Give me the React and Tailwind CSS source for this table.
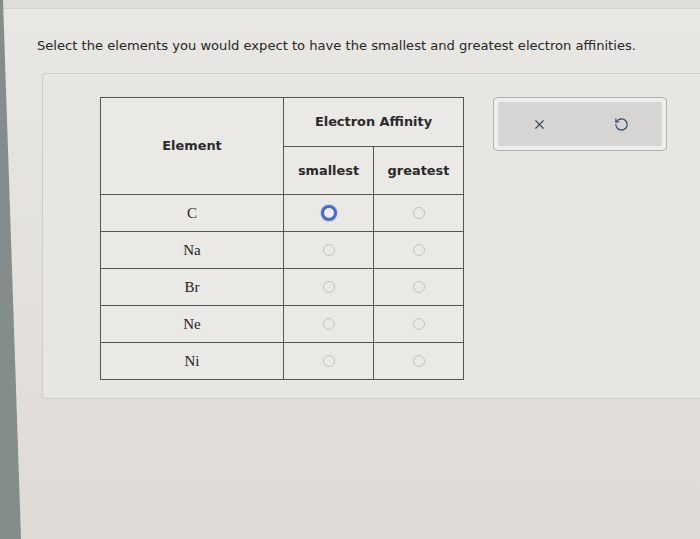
import { X, RotateCcw } from "lucide-react";

const elements = ["C", "Na", "Br", "Ne", "Ni"];

function Radio({ selected }) {
  if (selected) {
    return (
      <div className="mx-auto w-[16px] h-[16px] rounded-full border-[3px] border-[#4b69cf] bg-[#eef0f8] shadow-[0_0_2px_#7d97e6]" />
    );
  }
  return <div className="mx-auto w-[12px] h-[12px] rounded-full border border-[#c3c2bf]" />;
}

export default function App() {
  return (
    <div className="relative w-[700px] h-[539px] overflow-hidden bg-linear-to-b from-[#e9e7e3] to-[#dedbd6] font-['DejaVu_Sans',sans-serif]">
      <div className="absolute left-0 top-0 w-[22px] h-full bg-[#858c8c] [clip-path:polygon(0_0,3px_0,21px_100%,0_100%)]" />
      <div className="h-[9px] bg-[#e0deda] border-b border-[#d4d2ce]" />

      <p className="pl-[37px] pt-[28px] text-[13.1px] leading-[18px] text-[#262626]">
        Select the elements you would expect to have the smallest and greatest electron affinities.
      </p>

      <div className="mt-[18px] ml-[42px] h-[326px] border border-r-0 border-[#cfcdc9] rounded-l-[4px] bg-[#e8e6e2]">
        <div className="flex items-start pt-[23px] pl-[57px]">
          <table className="border-collapse bg-[#ebe9e5] text-[#2a2a2a]">
            <tbody>
              <tr className="h-[49px]">
                <th rowSpan={2} className="w-[183px] border border-[#555] text-[12.9px] font-bold">
                  Element
                </th>
                <th colSpan={2} className="border border-[#555] text-[12.9px] font-bold">
                  Electron Affinity
                </th>
              </tr>
              <tr className="h-[48px]">
                <th className="w-[90px] border border-[#555] text-[12.9px] font-bold">smallest</th>
                <th className="w-[90px] border border-[#555] text-[12.9px] font-bold">greatest</th>
              </tr>
              {elements.map((el, i) => (
                <tr key={el} className="h-[37px]">
                  <td className="border border-[#555] text-center font-['Liberation_Serif',serif] text-[15px] text-[#222]">
                    {el}
                  </td>
                  <td className="border border-[#555]">
                    <Radio selected={i === 0} />
                  </td>
                  <td className="border border-[#555]">
                    <Radio />
                  </td>
                </tr>
              ))}
            </tbody>
          </table>

          <div className="ml-[29px] w-[174px] h-[54px] rounded-[4px] border border-[#b4b2af] bg-[#efeeec] p-[4px]">
            <div className="flex h-full items-center justify-around rounded-[2px] bg-[#d6d5d3] text-[#3a4556]">
              <X className="w-[15px] h-[15px]" strokeWidth={1.8} />
              <RotateCcw className="w-[15px] h-[15px]" strokeWidth={1.8} />
            </div>
          </div>
        </div>
      </div>
    </div>
  );
}
